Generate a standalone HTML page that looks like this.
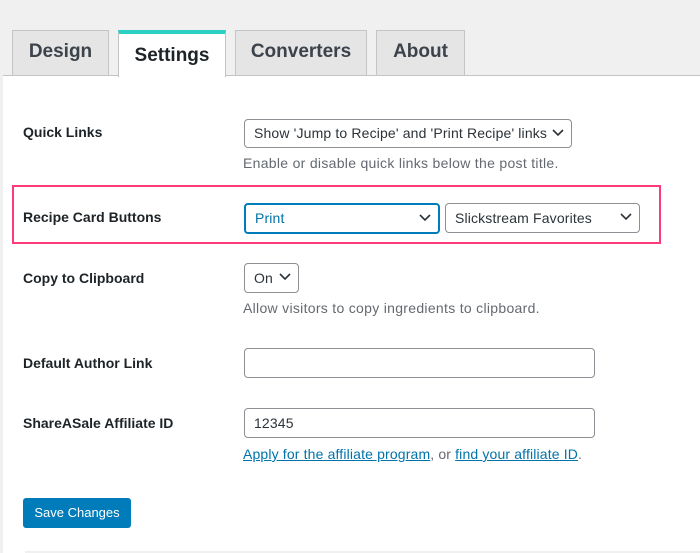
<!DOCTYPE html>
<html><head><style>
*{box-sizing:border-box;margin:0;padding:0}
body{width:700px;height:553px;background:#f0f0f1;font-family:"Liberation Sans",sans-serif;color:#1d2327;position:relative;overflow:hidden}
.abs{position:absolute}
.tab{position:absolute;top:30px;height:46px;background:#e5e5e5;border:1px solid #c3c4c7;border-bottom:none;font-size:19px;font-weight:bold;color:#3c434a;text-align:center;line-height:42px}
.panel{position:absolute;left:3px;top:75px;width:697px;height:478px;background:#fff;border-top:1px solid #c3c4c7}
.lbl{position:absolute;left:23px;font-size:14px;font-weight:bold;color:#1d2327}
.sel{position:absolute;border:1px solid #8c8f94;border-radius:4px;background:#fff;font-size:14px;color:#2c3338;padding-left:9px;line-height:26px;letter-spacing:.15px}
.sel svg{position:absolute;right:7px;top:9px}
.help{position:absolute;left:243px;font-size:14px;color:#646970;letter-spacing:.3px}
a{color:#0073aa;text-decoration:underline}
</style></head><body>
<div class="tab" style="left:12px;width:97px">Design</div>
<div class="tab" style="left:235px;width:132px">Converters</div>
<div class="tab" style="left:376px;width:89px">About</div>
<div class="panel"></div>
<div class="tab" style="left:118px;width:108px;height:47px;background:#fff;border-top:4px solid #2bd0c3;line-height:44px;color:#1d2327">Settings</div>

<div class="lbl" style="top:124px">Quick Links</div>
<div class="sel" style="left:244px;top:119px;width:328px;height:29px">Show 'Jump to Recipe' and 'Print Recipe' links<svg width="12" height="8" viewBox="0 0 12 8"><path d="M1 1l5 5 5-5" fill="none" stroke="#2c3338" stroke-width="1.6"/></svg></div>
<div class="help" style="top:155px">Enable or disable quick links below the post title.</div>

<div class="abs" style="left:12px;top:185px;width:649px;height:59px;border:2px solid #ff3a78"></div>
<div class="lbl" style="top:209px">Recipe Card Buttons</div>
<div class="sel" style="left:244px;top:203px;width:196px;height:31px;border:2px solid #007cba;color:#0073aa;line-height:27px">Print<svg width="12" height="8" viewBox="0 0 12 8"><path d="M1 1l5 5 5-5" fill="none" stroke="#2c3338" stroke-width="1.6"/></svg></div>
<div class="sel" style="left:445px;top:203px;width:195px;height:30px;line-height:28px">Slickstream Favorites<svg width="12" height="8" viewBox="0 0 12 8"><path d="M1 1l5 5 5-5" fill="none" stroke="#2c3338" stroke-width="1.6"/></svg></div>

<div class="lbl" style="top:270px">Copy to Clipboard</div>
<div class="sel" style="left:244px;top:263px;width:55px;height:30px;line-height:28px">On<svg width="12" height="8" viewBox="0 0 12 8"><path d="M1 1l5 5 5-5" fill="none" stroke="#2c3338" stroke-width="1.6"/></svg></div>
<div class="help" style="top:300px">Allow visitors to copy ingredients to clipboard.</div>

<div class="lbl" style="top:355px">Default Author Link</div>
<div class="sel" style="left:244px;top:348px;width:351px;height:30px"></div>

<div class="lbl" style="top:415px">ShareASale Affiliate ID</div>
<div class="sel" style="left:244px;top:408px;width:351px;height:30px;line-height:28px">12345</div>
<div class="help" style="top:446px;letter-spacing:.15px"><a>Apply for the affiliate program</a>, or <a>find your affiliate ID</a>.</div>

<div class="abs" style="left:23px;top:498px;width:108px;height:30px;background:#007cba;border-radius:3px;color:#fff;font-size:13px;text-align:center;line-height:30px">Save Changes</div>
<div class="abs" style="left:25px;top:551px;width:675px;height:2px;background:#f0f0f1"></div>
</body></html>
